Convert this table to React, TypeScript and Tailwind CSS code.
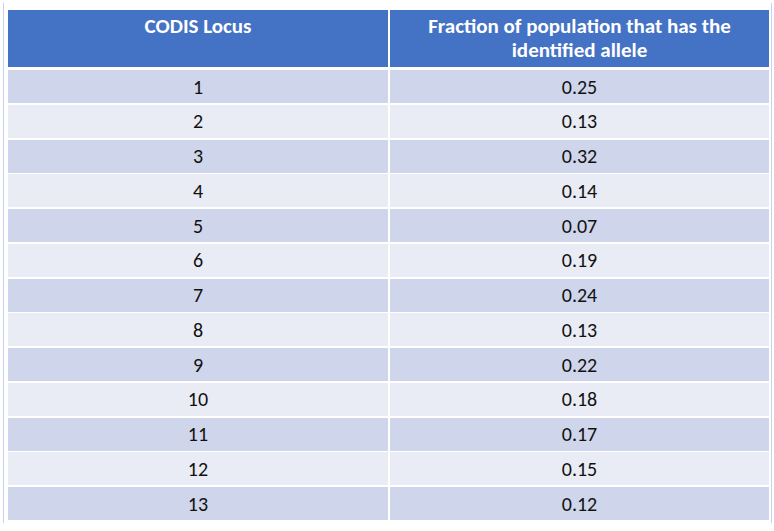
const rows: [string, string][] = [
  ["1", "0.25"],
  ["2", "0.13"],
  ["3", "0.32"],
  ["4", "0.14"],
  ["5", "0.07"],
  ["6", "0.19"],
  ["7", "0.24"],
  ["8", "0.13"],
  ["9", "0.22"],
  ["10", "0.18"],
  ["11", "0.17"],
  ["12", "0.15"],
  ["13", "0.12"],
];

export default function App() {
  return (
    <div className="w-[774px] h-[531px] bg-white pl-[3px] pt-[3px] font-['Calibri','Carlito','Lato',sans-serif]">
      <div className="w-[769px] h-[520px] border-l border-r border-[#c3d0ee] pl-[4px] pt-[7px]">
        <div className="w-[761px] flex flex-col">
          {/* header */}
          <div className="grid grid-cols-[380px_379px] gap-x-[2px] h-[57px] mb-[3px]">
            <div className="bg-[#4472c4] text-white font-bold text-[21px] leading-[24px] text-center pt-[4px]">
              CODIS Locus
            </div>
            <div className="bg-[#4472c4] text-white font-bold text-[21px] leading-[24px] text-center pt-[4px]">
              Fraction of population that has the
              <br />
              identified allele
            </div>
          </div>
          {/* body */}
          <div className="flex flex-col gap-y-[1.75px]">
            {rows.map(([locus, frac], i) => {
              const bg = i % 2 === 0 ? "bg-[#cfd5ea]" : "bg-[#e9ebf5]";
              return (
                <div key={locus} className="grid grid-cols-[380px_379px] gap-x-[2px] h-[33px]">
                  <div className={`${bg} flex items-center justify-center text-[20px] text-[#111]`}>{locus}</div>
                  <div className={`${bg} flex items-center justify-center text-[20px] text-[#111]`}>{frac}</div>
                </div>
              );
            })}
          </div>
        </div>
      </div>
    </div>
  );
}
